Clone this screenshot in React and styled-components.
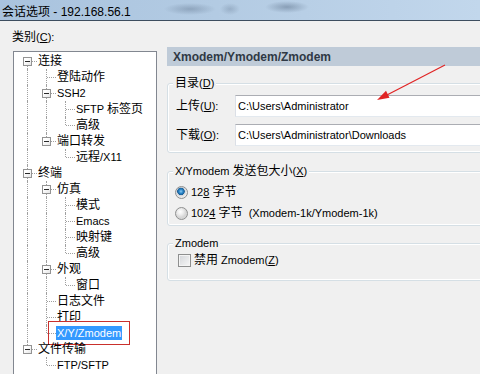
import React from 'react';
import styled, { createGlobalStyle } from 'styled-components';

const GlobalStyle = createGlobalStyle`
  html, body {
    margin: 0;
    padding: 0;
    background: #f0f0f0;
  }
  body {
    width: 480px;
    height: 374px;
    overflow: hidden;
  }
`;

const FONT = `"Liberation Sans", "Noto Sans CJK SC", sans-serif`;

const Window = styled.div`
  position: relative;
  width: 480px;
  height: 374px;
  overflow: hidden;
  background: #f0f0f0;
  font-family: ${FONT};
  font-size: 11px;
  color: #000;
  display: flex;
  flex-direction: column;
`;

const TitleBar = styled.div`
  flex: none;
  height: 20px;
  display: flex;
  align-items: center;
  padding-left: 2px;
  font-size: 12px;
  border-bottom: 1px solid #3d4d5f;
  background:
    radial-gradient(ellipse 26px 6px at 190px 9px, rgba(90, 110, 135, 0.4), transparent),
    radial-gradient(ellipse 10px 6px at 230px 9px, rgba(90, 110, 135, 0.3), transparent),
    radial-gradient(ellipse 22px 6px at 287px 7px, rgba(80, 100, 125, 0.45), transparent),
    linear-gradient(90deg, #a9c3de 0%, #b3cbe3 45%, #c2d7ec 100%);
`;

// Chinese glyphs in the dialog are drawn a point larger than the latin text
const Han = styled.span`
  font-size: 12px;
  line-height: 1;
`;

const Body = styled.div`
  flex: 1;
  min-height: 0;
  display: flex;
  padding-left: 12px;
`;

const LeftCol = styled.div`
  flex: none;
  width: 145px;
  display: flex;
  flex-direction: column;
`;

const CategoryLabel = styled.div`
  padding-top: 8px;
  line-height: 16px;
  height: 16px;
  margin-bottom: 6px;
`;

const Key = styled.span`
  text-decoration: underline;
`;

const Tree = styled.div`
  flex: none;
  box-sizing: border-box;
  width: 144px;
  height: 340px;
  margin-left: 1px;
  padding: 1px 0 0 4px;
  background: #fff;
  border: 1px solid #828790;
`;

const Row = styled.div`
  display: flex;
  align-items: center;
  height: 16px;
  white-space: nowrap;
`;

const Indent = styled.span`
  position: relative;
  flex: none;
  width: 19px;
  height: 16px;

  ${p => p.$line && `
    &::before {
      content: '';
      position: absolute;
      left: 9px;
      top: 0;
      bottom: 0;
      border-left: 1px dotted #a0a0a0;
    }
  `}
`;

const Branch = styled.span`
  position: relative;
  flex: none;
  width: 19px;
  height: 16px;

  &::before {
    content: '';
    position: absolute;
    left: 9px;
    top: ${p => (p.$first ? '8px' : '0')};
    ${p => (p.$last ? 'height: 8px;' : 'bottom: 0;')}
    border-left: 1px dotted #a0a0a0;
  }

  &::after {
    content: '';
    position: absolute;
    left: 10px;
    top: 8px;
    width: 9px;
    border-top: 1px dotted #a0a0a0;
  }
`;

const Expander = styled.span`
  position: absolute;
  z-index: 1;
  left: 5px;
  top: 4px;
  width: 9px;
  height: 9px;
  box-sizing: border-box;
  border: 1px solid #939393;
  background: linear-gradient(135deg, #ffffff 30%, #e6e6e6);

  &::before {
    content: '';
    position: absolute;
    left: 1px;
    top: 3px;
    width: 5px;
    height: 1px;
    background: #2a2a2a;
  }
`;

const Label = styled.span`
  position: relative;
  display: inline-block;
  line-height: 14px;
  padding: 0 1px;
  color: ${p => (p.$selected ? '#fff' : '#000')};
  background: ${p => (p.$selected ? '#3399ff' : 'transparent')};
`;

const Callout = styled.span`
  position: absolute;
  left: -8px;
  top: 50%;
  margin-top: -12px;
  width: 82px;
  height: 24px;
  box-sizing: border-box;
  border: 1px solid #c9302c;
  pointer-events: none;
`;

const RightCol = styled.div`
  flex: none;
  width: 330px;
  margin-left: 10px;
  padding-top: 26px;
`;

const PanelHeader = styled.div`
  height: 19px;
  display: flex;
  align-items: center;
  padding-left: 6px;
  background: #bfcbd8;
  color: #2f3945;
  font-size: 12px;
  font-weight: bold;
`;

const Group = styled.fieldset`
  margin: ${p => p.$gap}px 0 0 0;
  padding: ${p => p.$pad};
  border: 1px solid #d5dfe5;
  border-radius: 3px;
  box-shadow: inset 0 0 0 1px #fff;
  min-width: 0;
`;

const Legend = styled.legend`
  padding: 0 2px;
  margin-left: -3px;
  line-height: 14px;
  background: #f0f0f0;
`;

const FieldRow = styled.div`
  display: flex;
  align-items: center;
  height: 22px;

  & + & {
    margin-top: 7px;
  }
`;

const FieldLabel = styled.span`
  flex: none;
  width: 59px;
`;

const TextBox = styled.div`
  flex: 1;
  box-sizing: border-box;
  height: 22px;
  line-height: 20px;
  padding-left: 2px;
  background: #fff;
  border: 1px solid #dbdfe6;
  border-top-color: #abadb3;
  border-bottom-color: #e3e9ef;
  white-space: nowrap;
`;

const Option = styled.div`
  display: flex;
  align-items: center;
  height: 16px;

  & + & {
    margin-top: 5px;
  }
`;

const OptionText = styled.span`
  white-space: pre;
`;

const Radio = styled.span`
  flex: none;
  width: 13px;
  height: 13px;
  margin: 0 3px 0 -1px;
  box-sizing: border-box;
  border-radius: 50%;
  border: 1px solid #8e8f8f;
  background: ${p =>
    p.$checked
      ? 'radial-gradient(circle at 45% 40%, #8ccaf2 0, #2a86c8 2px, #1b5e96 3.5px, #cfd3d8 4px, #eaeaea 5.5px)'
      : 'radial-gradient(circle at 40% 35%, #ffffff 0, #ececec 3px, #d6d6d6 5.5px)'};
`;

const CheckBox = styled.span`
  flex: none;
  width: 13px;
  height: 13px;
  margin: 0 3px 0 2px;
  box-sizing: border-box;
  border: 1px solid #8e8f8f;
  background: linear-gradient(135deg, #d3d5d9, #f7f7f7);
  box-shadow: inset 0 0 0 1px #f4f4f4;
`;

const Arrow = styled.svg`
  position: absolute;
  left: 0;
  top: 0;
  pointer-events: none;
`;

// wrap runs of Chinese characters so they get the larger size
function zh(text) {
  return text
    .split(/([\u4e00-\u9fff]+)/)
    .map((part, i) => (/[\u4e00-\u9fff]/.test(part) ? <Han key={i}>{part}</Han> : part));
}

const treeData = [
  {
    label: '连接',
    children: [
      { label: '登陆动作' },
      { label: 'SSH2', children: [{ label: 'SFTP 标签页' }, { label: '高级' }] },
      { label: '端口转发', children: [{ label: '远程/X11' }] },
    ],
  },
  {
    label: '终端',
    children: [
      {
        label: '仿真',
        children: [{ label: '模式' }, { label: 'Emacs' }, { label: '映射键' }, { label: '高级' }],
      },
      { label: '外观', children: [{ label: '窗口' }] },
      { label: '日志文件' },
      { label: '打印' },
      { label: 'X/Y/Zmodem', selected: true },
    ],
  },
  { label: '文件传输', children: [{ label: 'FTP/SFTP' }] },
];

// flatten the tree into rows, keeping which ancestor lines continue
function flatten(nodes, guides = [], out = []) {
  nodes.forEach((node, i) => {
    const last = i === nodes.length - 1;
    out.push({ ...node, guides, last, first: guides.length === 0 && i === 0 });
    if (node.children) flatten(node.children, [...guides, !last], out);
  });
  return out;
}

const rows = flatten(treeData);

export default function App() {
  return (
    <Window>
      <GlobalStyle />
      <TitleBar>会话选项 - 192.168.56.1</TitleBar>
      <Body>
        <LeftCol>
          <CategoryLabel>
            <Han>类别</Han>(<Key>C</Key>):
          </CategoryLabel>
          <Tree>
            {rows.map((row, i) => (
              <Row key={i}>
                {row.guides.map((g, j) => (
                  <Indent key={j} $line={g} />
                ))}
                <Branch $first={row.first} $last={row.last}>
                  {row.children && <Expander />}
                </Branch>
                <Label $selected={row.selected}>
                  {zh(row.label)}
                  {row.selected && <Callout />}
                </Label>
              </Row>
            ))}
          </Tree>
        </LeftCol>

        <RightCol>
          <PanelHeader>Xmodem/Ymodem/Zmodem</PanelHeader>

          <Group $gap={10} $pad="5px 8px 6px 8px">
            <Legend>
              <Han>目录</Han>(<Key>D</Key>)
            </Legend>
            <FieldRow>
              <FieldLabel>
                <Han>上传</Han>(<Key>U</Key>):
              </FieldLabel>
              <TextBox>C:\Users\Administrator</TextBox>
            </FieldRow>
            <FieldRow>
              <FieldLabel>
                <Han>下载</Han>(<Key>O</Key>):
              </FieldLabel>
              <TextBox>C:\Users\Administrator\Downloads</TextBox>
            </FieldRow>
          </Group>

          <Group $gap={11} $pad="6px 8px 4px 8px">
            <Legend>
              X/Ymodem <Han>发送包大小</Han>(<Key>X</Key>)
            </Legend>
            <Option>
              <Radio $checked />
              <OptionText>
                12<Key>8</Key> <Han>字节</Han>
              </OptionText>
            </Option>
            <Option>
              <Radio />
              <OptionText>
                102<Key>4</Key> <Han>字节</Han>{'  '}(Xmodem-1k/Ymodem-1k)
              </OptionText>
            </Option>
          </Group>

          <Group $gap={10} $pad="2px 8px 12px 8px">
            <Legend>Zmodem</Legend>
            <Option>
              <CheckBox />
              <OptionText>
                <Han>禁用</Han> Zmodem(<Key>Z</Key>)
              </OptionText>
            </Option>
          </Group>
        </RightCol>
      </Body>

      <Arrow width="480" height="374" viewBox="0 0 480 374">
        <line x1="445" y1="65" x2="386" y2="95.5" stroke="#e02424" strokeWidth="1.2" />
        <polygon points="377,100 389.5,97.8 386,90.8" fill="#e02424" />
      </Arrow>
    </Window>
  );
}
